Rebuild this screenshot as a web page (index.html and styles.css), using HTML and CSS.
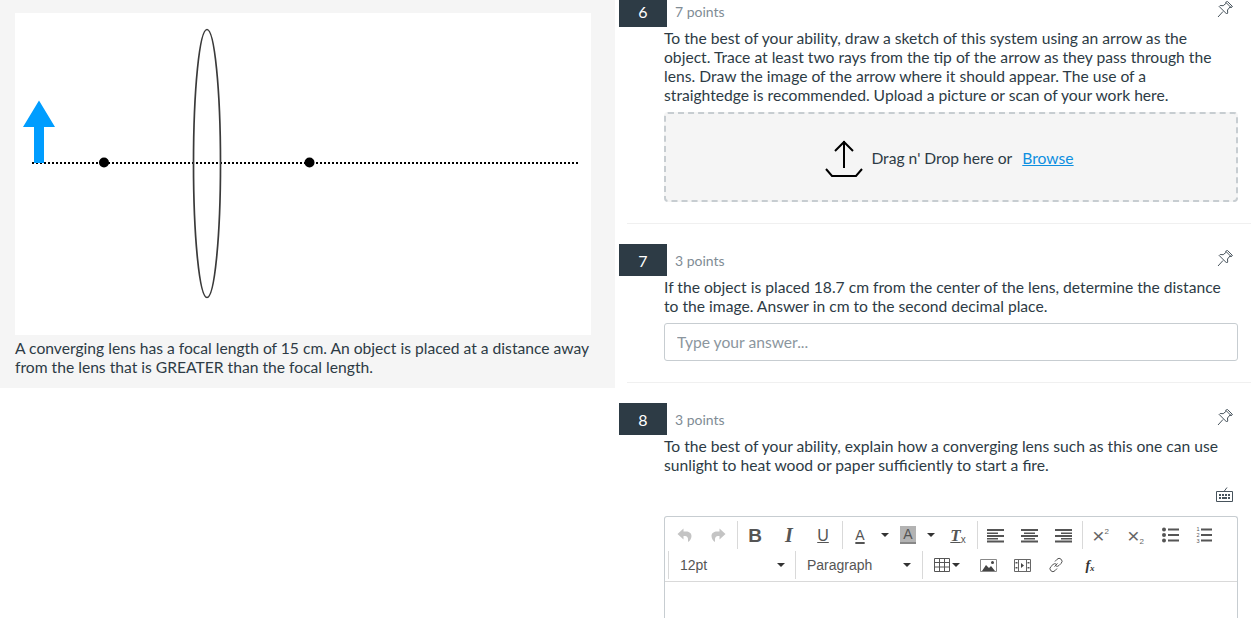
FILE: index.html
```html
<!DOCTYPE html>
<html lang="en">
<head>
    <meta charset="UTF-8">
    <title>Quiz</title>
    <link rel="stylesheet" href="styles.css">
</head>
<body>
    <div class="page">
        <div class="stimulus">
            <svg class="diagram" width="576" height="322" viewBox="0 0 576 322">
                <line x1="17" y1="150" x2="563" y2="150" stroke="#000" stroke-width="2" stroke-dasharray="2 2"/>
                <ellipse cx="192" cy="150.5" rx="13.5" ry="134" fill="none" stroke="#3a3a3a" stroke-width="1.700"/>
                <circle cx="89" cy="149.5" r="5" fill="#000"/>
                <circle cx="294.5" cy="149.5" r="5" fill="#000"/>
                <path d="M24 87.5 L40 114 H29 V150 H19 V114 H8 Z" fill="#009dff"/>
            </svg>
            <p class="caption">A converging lens has a focal length of 15 cm. An object is placed at a distance away from the lens that is GREATER than the focal length.</p>
        </div>

        <div class="questions">
            <div class="question q6">
                <div class="q-head">
                    <span class="q-num">6</span>
                    <span class="q-points">7 points</span>
                    <svg class="pin" width="18" height="18" viewBox="0 0 18 18"><path d="M10.500 1.500l5 5-1.500 1-1-.5-2.500 3 .2 3-1 1-7.500-7.500 1-1 3 .2 3-2.500-.5-1zM1 17l5-5.500M9.500 3l5 5" fill="none" stroke="#47535c" stroke-width="1"/></svg>
                </div>
                <div class="q-body">
                    <p class="q-text">To the best of your ability, draw a sketch of this system using an arrow as the object. Trace at least two rays from the tip of the arrow as they pass through the lens. Draw the image of the arrow where it should appear. The use of a straightedge is recommended. Upload a picture or scan of your work here.</p>
                    <div class="dropzone">
                        <svg class="upload-icon" width="38" height="38" viewBox="0 0 38 38"><path d="M19 2V29M10 12L19 3L28 12M1 30L7 37H31L37 30" fill="none" stroke="#000" stroke-width="2"/></svg>
                        <span>Drag n' Drop here or</span>
                        <a class="browse" href="#">Browse</a>
                    </div>
                </div>
            </div>

            <div class="question q7">
                <div class="q-head">
                    <span class="q-num">7</span>
                    <span class="q-points">3 points</span>
                    <svg class="pin" width="18" height="18" viewBox="0 0 18 18"><path d="M10.500 1.500l5 5-1.500 1-1-.5-2.500 3 .2 3-1 1-7.500-7.500 1-1 3 .2 3-2.500-.5-1zM1 17l5-5.500M9.500 3l5 5" fill="none" stroke="#47535c" stroke-width="1"/></svg>
                </div>
                <div class="q-body">
                    <p class="q-text">If the object is placed 18.7 cm from the center of the lens, determine the distance to the image. Answer in cm to the second decimal place.</p>
                    <input class="answer" type="text" placeholder="Type your answer...">
                </div>
            </div>

            <div class="question q8">
                <div class="q-head">
                    <span class="q-num">8</span>
                    <span class="q-points">3 points</span>
                    <svg class="pin" width="18" height="18" viewBox="0 0 18 18"><path d="M10.500 1.500l5 5-1.500 1-1-.5-2.500 3 .2 3-1 1-7.500-7.500 1-1 3 .2 3-2.500-.5-1zM1 17l5-5.500M9.500 3l5 5" fill="none" stroke="#47535c" stroke-width="1"/></svg>
                </div>
                <div class="q-body">
                    <p class="q-text">To the best of your ability, explain how a converging lens such as this one can use sunlight to heat wood or paper sufficiently to start a fire.</p>
                    <div class="kb-row">
                        <svg width="17" height="15" viewBox="0 0 17 15"><path d="M.5 4.500h16v10H.5zM8 4.500L11 .5" fill="none" stroke="#47535c"/><path d="M3 7h2v2H3zM6 7h2v2H6zM9 7h2v2H9zM12 7h2v2h-2zM3 10h2v2H3zM6 10h5v2H6zM12 10h2v2h-2z" fill="#47535c"/></svg>
                    </div>
                    <div class="editor">
                        <div class="tb-row tb-first">
                            <div class="tb-group">
                                <span class="tool"><svg width="15" height="15" viewBox="0 0 15 15"><path d="M6.500 .5L.5 6l6 5.500V8h1.500c2 0 3 1.500 3 3v3c2-1 3.500-3.500 3.500-6 0-3-2.500-4.500-5.500-4.500H6.500z" fill="#c4c4c4"/></svg></span>
                                <span class="tool"><svg class="flip" width="15" height="15" viewBox="0 0 15 15"><path d="M6.500 .5L.5 6l6 5.500V8h1.500c2 0 3 1.500 3 3v3c2-1 3.500-3.500 3.500-6 0-3-2.500-4.500-5.500-4.500H6.500z" fill="#c4c4c4"/></svg></span>
                            </div>
                            <div class="tb-group">
                                <span class="tool t-bold">B</span>
                                <span class="tool t-ital">I</span>
                                <span class="tool t-under">U</span>
                            </div>
                            <div class="tb-group tb-color">
                                <span class="tool t-color">A</span>
                                <span class="caret caret-s"></span>
                                <span class="tool t-color t-back"><span>A</span></span>
                                <span class="caret caret-s"></span>
                                <span class="tool t-clear"><span><u>T</u><sub>x</sub></span></span>
                            </div>
                            <div class="tb-group">
                                <span class="tool"><svg width="17" height="15" viewBox="0 0 17 15"><path d="M0 1h17v2H0zM0 4.500h11v1.500H0zM0 7h17v2H0zM0 10h11v1.500H0zM0 12.500h17v2H0z" fill="#555"/></svg></span>
                                <span class="tool"><svg width="17" height="15" viewBox="0 0 17 15"><path d="M0 1h17v2H0zM3 4.500h11v1.500H3zM0 7h17v2H0zM3 10h11v1.500H3zM0 12.500h17v2H0z" fill="#555"/></svg></span>
                                <span class="tool"><svg width="17" height="15" viewBox="0 0 17 15"><path d="M0 1h17v2H0zM6 4.500h11v1.500H6zM0 7h17v2H0zM6 10h11v1.500H6zM0 12.500h17v2H0z" fill="#555"/></svg></span>
                            </div>
                            <div class="tb-group tb-last">
                                <span class="tool t-script"><span>×<sup>2</sup></span></span>
                                <span class="tool t-script"><span>×<sub>2</sub></span></span>
                                <span class="tool"><svg width="17" height="16" viewBox="0 0 17 16"><circle cx="2" cy="2.500" r="2" fill="#555"/><circle cx="2" cy="8" r="2" fill="#555"/><circle cx="2" cy="13.500" r="2" fill="#555"/><path d="M6 1.500h11v2H6zM6 7h11v2H6zM6 12.500h11v2H6z" fill="#555"/></svg></span>
                                <span class="tool t-ol"><span class="ol-nums">1<br>2<br>3</span><svg width="11" height="16" viewBox="0 0 11 16"><path d="M0 1.500h11v2H0zM0 7h11v2H0zM0 12.500h11v2H0z" fill="#555"/></svg></span>
                            </div>
                        </div>
                        <div class="tb-row tb-second">
                            <div class="tb-select sel-size"><span>12pt</span><span class="caret"></span></div>
                            <div class="tb-select sel-para"><span>Paragraph</span><span class="caret"></span></div>
                            <div class="tb-icons">
                                <span class="tool t-table"><svg width="16" height="14" viewBox="0 0 16 14"><path d="M.5.500h15v13H.5zM.5 4.500h15M.5 9h15M5.500.500v13M10.500.500v13" fill="none" stroke="#555"/></svg><span class="caret caret-s"></span></span>
                                <span class="tool"><svg width="17" height="13" viewBox="0 0 17 13"><path d="M.5.500h16v12H.500z" fill="none" stroke="#888"/><path d="M2 12l4-6 3 3 2-2 4 5z" fill="#444"/><circle cx="12.500" cy="3.500" r="1.500" fill="#444"/></svg></span>
                                <span class="tool"><svg width="17" height="13" viewBox="0 0 17 13"><path d="M.5.500h16v12H.500zM4.500.500v12M12.500.500v12" fill="none" stroke="#666"/><path d="M7 4l3 2.500L7 9z" fill="#444"/><path d="M1.500 3h2v1.500h-2zM1.500 8h2v1.500h-2zM13.500 3h2v1.500h-2zM13.500 8h2v1.500h-2z" fill="#555"/></svg></span>
                                <span class="tool"><svg width="16" height="16" viewBox="0 0 16 16"><path d="M6.500 9.500l3-3M7 4.500l2-2.200a2.800 2.800 0 0 1 4.200 4L11 8.500a2.800 2.800 0 0 1-3.500.3M9 11.500l-2 2.200a2.800 2.800 0 0 1-4.200-4L5 7.500a2.800 2.800 0 0 1 3.500-.3" fill="none" stroke="#555"/></svg></span>
                                <span class="tool t-fx"><span>f<sub>x</sub></span></span>
                            </div>
                        </div>
                        <div class="editor-area"></div>
                    </div>
                </div>
            </div>
        </div>
    </div>
</body>
</html>
```

FILE: styles.css
```css
html, body { margin: 0; height: 618px; overflow: hidden; background: #fff; }
body { font-family: Lato, "Open Sans", sans-serif; font-size: 15.65px; line-height: 19px; color: #2d3b45; }
p { margin: 0; }

.page { display: flex; align-items: flex-start; }

.stimulus { width: 576px; flex: none; padding: 13px 24px 11px 15px; background: #f5f5f5; }
.diagram { display: block; background: #fff; }
.caption { margin-top: 4px; }

.questions { flex: 1; min-width: 0; margin-top: -5px; padding-left: 4px; }
.question { padding-bottom: 21px; border-bottom: 1px solid #f0f0f0; margin-left: 8px; }
.q8 { border-bottom: none; }
.q7, .q8 { padding-top: 20px; }
.q-head { display: flex; align-items: center; height: 32px; margin-left: -8px; }
.q-num { width: 48px; height: 32px; line-height: 33px; text-align: center; background: #2d3b45; color: #fff; font-size: 16px; }
.q-points { margin-left: 8px; font-size: 14px; color: #7f8c95; }
.pin { margin-left: auto; margin-right: 16px; margin-top: -4px; }
.q-body { padding-left: 37px; padding-right: 13px; }
.q-text { margin-top: 2px; padding-right: 6px; }

.dropzone {
    display: flex; align-items: center; justify-content: center;
    height: 86px; margin-top: 7px; padding-right: 3px;
    background: #f5f5f5; border: 2px dashed #c7cdd1; border-radius: 4px;
    white-space: nowrap;
}
.dropzone span, .browse { position: relative; top: 1px; }
.upload-icon { margin-right: 8px; margin-top: 1px; }
.browse { margin-left: 10px; color: #0e8fe0; }

.answer {
    display: block; box-sizing: border-box; width: 100%; height: 38px; margin-top: 7px; padding: 0 12px;
    border: 1px solid #c7cdd1; border-radius: 3px; font: inherit; color: #2d3b45;
}
.answer::placeholder { color: #8b969e; opacity: 1; }

.kb-row { display: flex; justify-content: flex-end; padding: 12px 5px 0 0; height: 27px; }

.editor { margin-top: 2px; border: 1px solid #c7cdd1; border-bottom: none; border-radius: 3px 3px 0 0; font-family: "Liberation Sans", Arial, sans-serif; color: #555; }
.tb-row { display: flex; align-items: center; }
.tb-first { padding-top: 4px; padding-left: 2px; }
.tb-second { padding: 2px 0 2px 3px; border-bottom: 1px solid #d9d9d9; }
.tb-group { display: flex; align-items: center; height: 28px; padding-right: 2px; border-right: 1px solid #d9d9d9; }
.tb-color { padding-left: 2px; }
.tb-last { border-right: none; }
.tool { display: flex; align-items: center; justify-content: center; width: 34px; height: 28px; flex: none; }
.flip { transform: scaleX(-1); }

.t-bold { font-weight: bold; font-size: 19px; }
.t-ital { font-style: italic; font-weight: bold; font-size: 20px; font-family: "Liberation Serif", serif; }
.t-under { font-size: 16px; text-decoration: underline; }
.t-color { width: 30px; font-size: 14px; text-decoration: underline; text-decoration-thickness: 2px; text-underline-offset: 2px; }
.t-back { width: 26px; text-decoration: none; }
.t-back span { display: block; width: 16px; height: 18px; line-height: 16px; text-align: center; background: #b3b3b3; border-bottom: 2px solid #888; box-sizing: border-box; }
.t-clear { font-style: italic; font-weight: bold; font-size: 17px; font-family: "Liberation Serif", serif; }
.t-clear sub { font-size: 10px; font-style: normal; font-weight: normal; font-family: "Liberation Sans", sans-serif; line-height: 0; vertical-align: -2px; }
.t-script { width: 35px; font-size: 21px; color: #666; }
.t-script sup { font-size: 8px; line-height: 0; vertical-align: 9px; }
.t-script sub { font-size: 8px; line-height: 0; vertical-align: -1px; }
.t-ol { gap: 1px; }
.ol-nums { font-size: 5.500px; line-height: 6px; }

.caret { display: inline-block; width: 0; height: 0; border: 4px solid transparent; border-top-color: #333; border-bottom: none; }
.caret-s { margin: 0 6px; flex: none; }

.tb-select { display: flex; align-items: center; justify-content: space-between; box-sizing: border-box; height: 28px; font-size: 14px; border-left: 1px solid #d9d9d9; }
.sel-size { width: 127px; padding: 0 10px 0 11px; }
.sel-para { width: 127px; padding: 0 11px 0 11px; }
.tb-icons { display: flex; align-items: center; height: 28px; border-left: 1px solid #d9d9d9; }
.t-table { width: 48px; }
.t-table .caret-s { margin: 0 0 0 2px; }
.t-fx { font-family: "Liberation Serif", serif; font-style: italic; font-weight: bold; font-size: 14px; color: #333; }
.t-fx sub { font-size: 9px; line-height: 0; vertical-align: -1px; }

.editor-area { height: 60px; }
```
